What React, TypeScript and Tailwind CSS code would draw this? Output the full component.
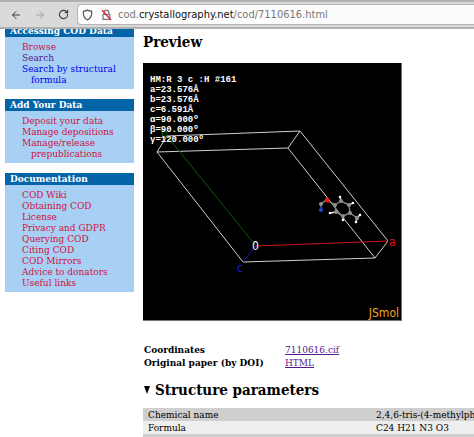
import { ArrowLeft, ArrowRight, RotateCw } from 'lucide-react';

type NavLink = { label: string; color: string };
type NavSection = { title: string; links: NavLink[] };

const RED = 'text-[#d0103c]';
const PURPLE = 'text-[#551a8b]';
const BLUE = 'text-[#0000ee]';

const sections: NavSection[] = [
  {
    title: 'Accessing COD Data',
    links: [
      { label: 'Browse', color: RED },
      { label: 'Search', color: PURPLE },
      { label: 'Search by structural formula', color: BLUE },
    ],
  },
  {
    title: 'Add Your Data',
    links: [
      { label: 'Deposit your data', color: RED },
      { label: 'Manage depositions', color: RED },
      { label: 'Manage/release prepublications', color: RED },
    ],
  },
  {
    title: 'Documentation',
    links: [
      { label: 'COD Wiki', color: RED },
      { label: 'Obtaining COD', color: RED },
      { label: 'License', color: RED },
      { label: 'Privacy and GDPR', color: RED },
      { label: 'Querying COD', color: RED },
      { label: 'Citing COD', color: RED },
      { label: 'COD Mirrors', color: RED },
      { label: 'Advice to donators', color: RED },
      { label: 'Useful links', color: RED },
    ],
  },
];

const cellInfo = [
  'HM:R 3 c :H #161',
  'a=23.576Å',
  'b=23.576Å',
  'c=6.591Å',
  'α=90.000º',
  'β=90.000º',
  'γ=120.000º',
];

const parameters = [
  { name: 'Chemical name', value: '2,4,6-tris-(4-methylphenoxy)-1,3,5-triazine' },
  { name: 'Formula', value: 'C24 H21 N3 O3' },
];

const BrowserBar = () => (
  <header className="relative z-10 flex h-[29px] items-center border-t-2 border-b-2 border-[#b0b0b0] bg-[#dadada] text-[#3c3c3c]">
    <nav className="flex w-[77px] shrink-0 items-center gap-3 pl-[10px]">
      <button type="button" aria-label="Back"><ArrowLeft size={12} strokeWidth={2} /></button>
      <button type="button" aria-label="Forward" className="text-[#a0a0a0]"><ArrowRight size={12} strokeWidth={2} /></button>
      <button type="button" aria-label="Reload"><RotateCw size={11} strokeWidth={2.4} /></button>
    </nav>
    <div className="flex h-[21px] min-w-0 flex-1 items-center rounded-l-sm border border-r-0 border-[#b4b4b4] bg-[#fcfcfc] pl-1">
      <svg width="11" height="12" viewBox="0 0 11 12" fill="none" stroke="#444" strokeWidth="1.1" className="shrink-0">
        <path d="M5.5 1 C7 2 8.5 2.2 9.7 2.3 C10 6.5 8.8 9.5 5.5 11 C2.2 9.5 1 6.5 1.3 2.3 C2.5 2.2 4 2 5.5 1Z" />
      </svg>
      <svg width="11" height="12" viewBox="0 0 11 12" fill="none" className="ml-2 shrink-0">
        <path d="M3 5.5 V3.6 A2.4 2.4 0 0 1 7.8 3.6 V5.5 M2 5.5 H8.8 V10.4 H2 Z" stroke="#777" strokeWidth="1.2" />
        <path d="M1 1 L10 11" stroke="#dc2440" strokeWidth="1.3" />
      </svg>
      <div className="ml-1.5 truncate font-['DejaVu_Sans_Condensed','DejaVu_Sans',sans-serif] text-[11px] leading-4 text-[#777]">
        cod.<span className="text-[#111]">crystallography.net</span>/cod/7110616.html
      </div>
    </div>
  </header>
);

const Sidebar = () => (
  <aside className="-mt-1 flex w-[129px] shrink-0 flex-col gap-[10px] text-[10px] leading-[11px]">
    {sections.map((section) => (
      <section key={section.title} className="bg-[#a8d0f5]">
        <h3 className="h-3 bg-[#0464a8] pl-[5px] font-bold leading-3 whitespace-nowrap text-white">{section.title}</h3>
        <ul className="py-1 pr-2 pl-[26px]">
          {section.links.map((link) => (
            <li key={link.label} className="-indent-[9px]">
              <a href="#" className={link.color}>{link.label}</a>
            </li>
          ))}
        </ul>
      </section>
    ))}
  </aside>
);

/* Unit cell with the asymmetric unit inside */
const UnitCell = () => (
  <svg viewBox="0 0 258 257" className="block h-[257px] w-[258px]" fill="none">
    <g stroke="#d0d0d0" strokeWidth="1">
      <path d="M14 89 L145 85 L157 68 L24 73 Z" />
      <path d="M14 89 L100 199 L232 195 L145 85" />
      <path d="M157 68 L245 178 L232 195" />
    </g>
    <path d="M24 73 L113 183" stroke="#075a0c" />
    <path d="M113 183 L245 178" stroke="#d01020" strokeWidth="1.2" />
    <path d="M113 183 L100 199" stroke="#1414c0" />

    <g stroke="#888" strokeWidth="1.4">
      <path d="M178 141 L183 137" />
      <path d="M186 138 L192 142" />
      <path d="M192 142 L198 138 L206 142 L207 150 L200 153 L193 149 Z" />
      <path d="M207 150 L214 155" />
    </g>
    <path d="M178 141 V147" stroke="#3450b0" strokeWidth="1.6" />
    <path d="M182 138 L187 139" stroke="#c01818" strokeWidth="1.8" />
    <g stroke="#e8e8e8" strokeWidth="1.3">
      <path d="M198 137 L197 134" />
      <path d="M206 142 L210 140" />
      <path d="M193 149 L187 150" />
      <path d="M200 153 L200 157" />
      <path d="M214 155 L217 152" />
      <path d="M214 155 L213 159" />
    </g>
    <g fill="#909090">
      <circle cx="178" cy="141" r="2" />
      <circle cx="192" cy="142" r="2" />
      <circle cx="198" cy="138" r="2" />
      <circle cx="206" cy="142" r="2" />
      <circle cx="207" cy="150" r="2" />
      <circle cx="200" cy="153" r="2" />
      <circle cx="193" cy="149" r="2" />
      <circle cx="214" cy="155" r="2.2" />
    </g>
    <circle cx="178" cy="147" r="2" fill="#2448d8" />
    <circle cx="184" cy="137" r="2.2" fill="#f01818" />
    <g fill="#fff">
      <circle cx="197" cy="134" r="1.3" />
      <circle cx="210" cy="140" r="1.3" />
      <circle cx="187" cy="150" r="1.3" />
      <circle cx="200" cy="157" r="1.3" />
      <circle cx="217" cy="152" r="1.3" />
      <circle cx="213" cy="159" r="1.3" />
    </g>

    <g className="font-['DejaVu_Sans_Condensed','DejaVu_Sans',sans-serif] text-[12px]">
      <text x="18" y="74" fill="#0a5a10">b</text>
      <text x="109" y="187" fill="#fff">0</text>
      <text x="94" y="209" fill="#1818e0">c</text>
      <text x="246" y="183" fill="#e01020">a</text>
      <text x="256" y="254" fill="#f0a818" textAnchor="end">JSmol</text>
    </g>
  </svg>
);

const Viewer = () => (
  <div className="relative mt-[13px] w-[259px] border-r border-b border-[#777] bg-black">
    <UnitCell />
    <div className="absolute top-3 left-[7px] font-['Liberation_Mono',monospace] text-[9px] leading-[10px] font-bold text-white">
      {cellInfo.map((line) => (
        <p key={line}>{line}</p>
      ))}
    </div>
  </div>
);

export default function App() {
  return (
    <div className="h-screen overflow-hidden bg-white font-['DejaVu_Serif_Condensed','DejaVu_Serif',serif] text-black">
      <BrowserBar />
      <div className="flex items-start gap-[9px] pl-[5px]">
        <Sidebar />
        <main className="min-w-0 flex-1 overflow-hidden pt-[5px]">
          <h2 className="text-[15px] leading-4 font-bold">Preview</h2>
          <Viewer />

          <table className="mt-[22px] text-[10px] leading-[13px]">
            <tbody>
              <tr>
                <th scope="row" className="w-[142px] pl-px text-left font-bold">Coordinates</th>
                <td><a href="#" className="text-[#551a8b] underline">7110616.cif</a></td>
              </tr>
              <tr>
                <th scope="row" className="pl-px text-left font-bold whitespace-nowrap">Original paper (by DOI)</th>
                <td><a href="#" className="text-[#551a8b] underline">HTML</a></td>
              </tr>
            </tbody>
          </table>

          <details open>
            <summary className="mt-[13px] mb-[10px] flex list-none items-center gap-1 text-[15px] leading-4 font-bold">
              <svg width="8" height="8" viewBox="0 0 8 8"><path d="M1 0 H7 L4 8 Z" /></svg>
              Structure parameters
            </summary>
            <table className="w-full text-[10px] leading-[13px] whitespace-nowrap">
              <tbody>
                {parameters.map((row) => (
                  <tr key={row.name} className="odd:bg-[#cfcfcf] even:bg-[#eeeeee]">
                    <th scope="row" className="w-[233px] min-w-[233px] pl-[5px] text-left font-normal">{row.name}</th>
                    <td>{row.value}</td>
                  </tr>
                ))}
              </tbody>
            </table>
            <div className="h-3 bg-[#cfcfcf]" />
          </details>
        </main>
      </div>
    </div>
  );
}
